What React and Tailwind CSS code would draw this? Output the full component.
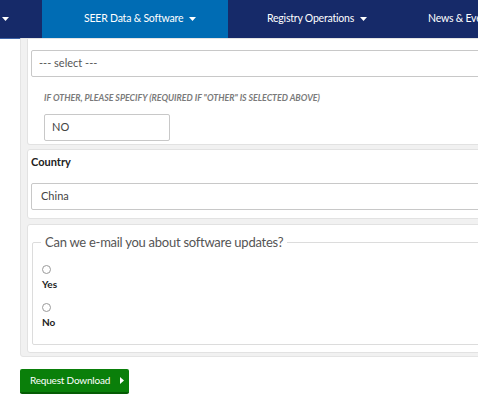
import React from "react";

function Caret({ className = "" }) {
  return (
    <svg width="7" height="4" viewBox="0 0 7 4" className={className}>
      <path d="M0 0 L7 0 L3.5 4 Z" fill="white" />
    </svg>
  );
}

export default function App() {
  return (
    <div
      className="w-[478px] h-[402px] overflow-hidden bg-white relative"
      style={{ fontFamily: "Lato, 'Open Sans', sans-serif" }}
    >
      {/* Nav */}
      <div className="flex h-[39px] w-[640px] bg-[#162a69] border-b border-[#3d63a8]">
        <div className="w-[42px] flex items-center pl-[2px]">
          <Caret />
        </div>
        <div className="w-[186px] bg-[#006cb4] flex items-center pl-[42px] gap-[6px] text-white text-[10.5px] tracking-[-0.02em]">
          <span>SEER Data &amp; Software</span>
          <Caret />
        </div>
        <div className="flex items-center pl-[39px] pr-[30px] gap-[6px] text-white text-[10.5px] tracking-[-0.02em]">
          <span>Registry Operations</span>
          <Caret />
        </div>
        <div className="flex items-center pl-[31px] pr-[34px] gap-[6px] text-white text-[10.5px] tracking-[-0.02em] whitespace-nowrap">
          <span>News &amp; Events</span>
          <Caret />
        </div>
      </div>

      {/* Form container */}
      <div className="ml-[20px] w-[600px] -mt-[1px] bg-[#f1f1f1] border border-[#e4e4e4] rounded-b-[3px] px-[6px] pb-[3px] flex flex-col gap-[4px]">
        {/* Card 1 */}
        <div className="bg-white border border-t-0 border-[#e2e2e2] rounded-b-[3px] px-[3px] pt-[11px] pb-[3px]">
          <div className="h-[27px] border border-[#c8c8c8] rounded-[2px] flex items-center pl-[7px] text-[11px] text-[#555]">
            --- select ---
          </div>
          <div className="pl-[13px] mt-[15px] text-[8.8px] italic font-bold uppercase text-[#7a7a7a] leading-[11px]">
            If other, please specify (required if "other" is selected above)
          </div>
          <div className="ml-[13px] mt-[11px] w-[126px] h-[27px] border border-[#c8c8c8] rounded-[2px] flex items-center pl-[7px] text-[11px] text-[#444]">
            NO
          </div>
        </div>

        {/* Card 2 */}
        <div className="bg-white border border-[#e2e2e2] rounded-[3px] px-[3px] pt-[4px] pb-[8px]">
          <div className="text-[11px] font-bold text-[#222] h-[16px] leading-[16px]">Country</div>
          <div className="mt-[13px] h-[27px] border border-[#c8c8c8] rounded-[2px] flex items-center pl-[9px] text-[11px] text-[#444]">
            China
          </div>
        </div>

        {/* Card 3 */}
        <div className="mt-[1px] bg-white border border-[#e2e2e2] rounded-[3px] px-[4px] pt-[8px] pb-[7px]">
          <fieldset className="border border-[#dcdcdc] rounded-[2px] px-[9px] pb-[16px] m-0">
            <legend className="px-[4px] ml-[-1px] text-[13px] tracking-[-0.02em] text-[#555] leading-[18px]">
              Can we e-mail you about software updates?
            </legend>
            <div className="mt-[14px] flex flex-col">
              <span className="w-[9px] h-[9px] rounded-full border border-[#9a9a9a] bg-white"></span>
              <span className="mt-[4px] text-[10px] font-bold text-[#222] leading-[12px]">Yes</span>
              <span className="mt-[13px] w-[9px] h-[9px] rounded-full border border-[#9a9a9a] bg-white"></span>
              <span className="mt-[4px] text-[10px] font-bold text-[#222] leading-[12px]">No</span>
            </div>
          </fieldset>
        </div>
      </div>

      {/* Button */}
      <div className="ml-[20px] mt-[12px]">
        <button className="w-[109px] h-[25px] bg-[#0a7f0a] border-b-[2px] border-[#055c05] rounded-[2px] flex items-center pl-[10px] gap-[10px] text-white text-[10px] tracking-[-0.02em] whitespace-nowrap">
          <span>Request Download</span>
          <svg width="4" height="7" viewBox="0 0 4 7">
            <path d="M0 0 L4 3.5 L0 7 Z" fill="white" />
          </svg>
        </button>
      </div>
    </div>
  );
}
